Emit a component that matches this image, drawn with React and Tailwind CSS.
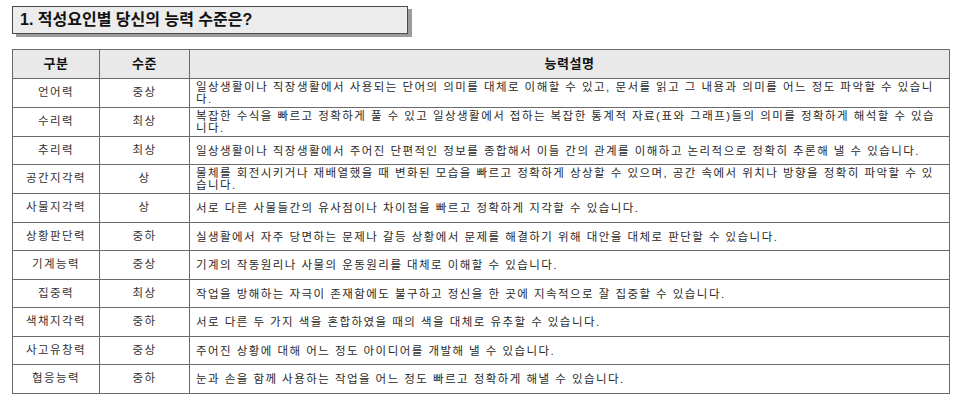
const rows = [
  {
    name: '언어력',
    level: '중상',
    h: 'h-[29px]',
    lines: [
      '일상생활이나 직장생활에서 사용되는 단어의 의미를 대체로 이해할 수 있고, 문서를 읽고 그 내용과 의미를 어느 정도 파악할 수 있습니',
      '다.',
    ],
  },
  {
    name: '수리력',
    level: '최상',
    h: 'h-[29px]',
    lines: [
      '복잡한 수식을 빠르고 정확하게 풀 수 있고 일상생활에서 접하는 복잡한 통계적 자료(표와 그래프)들의 의미를 정확하게 해석할 수 있습',
      '니다.',
    ],
  },
  {
    name: '추리력',
    level: '최상',
    h: 'h-[28px]',
    lines: [
      '일상생활이나 직장생활에서 주어진 단편적인 정보를 종합해서 이들 간의 관계를 이해하고 논리적으로 정확히 추론해 낼 수 있습니다.',
    ],
  },
  {
    name: '공간지각력',
    level: '상',
    h: 'h-[29px]',
    lines: [
      '물체를 회전시키거나 재배열했을 때 변화된 모습을 빠르고 정확하게 상상할 수 있으며, 공간 속에서 위치나 방향을 정확히 파악할 수 있',
      '습니다.',
    ],
  },
  {
    name: '사물지각력',
    level: '상',
    h: 'h-[29px]',
    lines: ['서로 다른 사물들간의 유사점이나 차이점을 빠르고 정확하게 지각할 수 있습니다.'],
  },
  {
    name: '상황판단력',
    level: '중하',
    h: 'h-[28px]',
    lines: ['실생활에서 자주 당면하는 문제나 갈등 상황에서 문제를 해결하기 위해 대안을 대체로 판단할 수 있습니다.'],
  },
  {
    name: '기계능력',
    level: '중상',
    h: 'h-[29px]',
    lines: ['기계의 작동원리나 사물의 운동원리를 대체로 이해할 수 있습니다.'],
  },
  {
    name: '집중력',
    level: '최상',
    h: 'h-[28px]',
    lines: ['작업을 방해하는 자극이 존재함에도 불구하고 정신을 한 곳에 지속적으로 잘 집중할 수 있습니다.'],
  },
  {
    name: '색채지각력',
    level: '중하',
    h: 'h-[29px]',
    lines: ['서로 다른 두 가지 색을 혼합하였을 때의 색을 대체로 유추할 수 있습니다.'],
  },
  {
    name: '사고유창력',
    level: '중상',
    h: 'h-[28px]',
    lines: ['주어진 상황에 대해 어느 정도 아이디어를 개발해 낼 수 있습니다.'],
  },
  {
    name: '협응능력',
    level: '중하',
    h: 'h-[28px]',
    lines: ['눈과 손을 함께 사용하는 작업을 어느 정도 빠르고 정확하게 해낼 수 있습니다.'],
  },
];

const font = { fontFamily: '"Liberation Sans", "Noto Sans CJK KR", sans-serif' };

export default function App() {
  return (
    <div className="w-[966px] h-[404px] bg-white overflow-hidden" style={font}>
      <div className="pt-[6px] pl-[12px]">
        <div className="w-[396px] h-[28px] bg-[#ececec] border border-[#4a4a4a] shadow-[4px_3px_0_#9c9c9c] flex items-center pl-[7px]">
          <span className="text-[16px] font-bold text-[#111] leading-none">
            1. 적성요인별 당신의 능력 수준은?
          </span>
        </div>
      </div>

      <div className="mt-[15px] ml-[12px] w-[938px] border border-[#6a6a6a] text-[#2a2a2a]">
        <div className="h-[29px] flex border-b border-[#6a6a6a] bg-[#e9e9e9] text-[13px] font-bold text-[#111] tracking-[0.6px]">
          <div className="w-[87px] border-r border-[#6a6a6a] flex items-center justify-center">구분</div>
          <div className="w-[90px] border-r border-[#6a6a6a] flex items-center justify-center">수준</div>
          <div className="flex-1 flex items-center justify-center">능력설명</div>
        </div>
        {rows.map((r, i) => (
          <div
            key={r.name}
            className={`${r.h} flex text-[11.5px] tracking-[1.45px] ${
              i < rows.length - 1 ? 'border-b border-[#6a6a6a]' : ''
            }`}
          >
            <div className="w-[87px] border-r border-[#6a6a6a] flex items-center justify-center text-[#333]">
              {r.name}
            </div>
            <div className="w-[90px] border-r border-[#6a6a6a] flex items-center justify-center text-[#333]">
              {r.level}
            </div>
            <div className="flex-1 flex flex-col justify-center pl-[6px] overflow-hidden">
              {r.lines.map((l) => (
                <span key={l} className="block whitespace-nowrap leading-[12px]">
                  {l}
                </span>
              ))}
            </div>
          </div>
        ))}
      </div>
    </div>
  );
}
